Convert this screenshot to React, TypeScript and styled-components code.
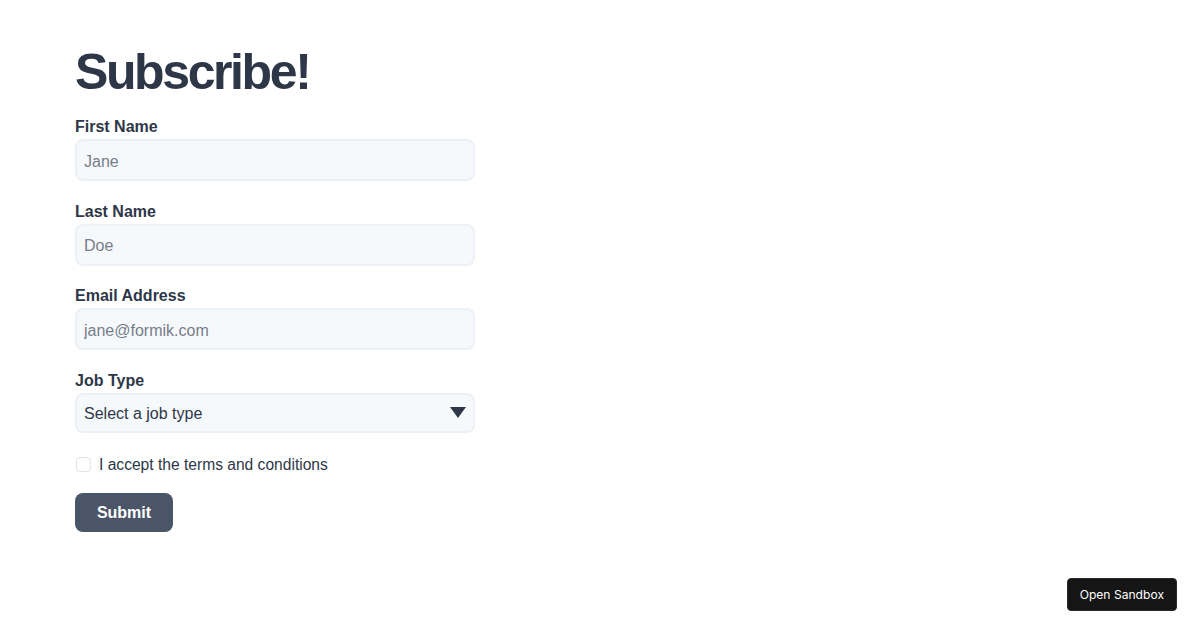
import React from "react";
import styled, { createGlobalStyle } from "styled-components";

const GlobalStyle = createGlobalStyle`
  body {
    margin: 0;
    background: #fff;
    font-family: "Liberation Sans", Arial, sans-serif;
    color: #2d3748;
  }
`;

const App = () => {
  return (
    <>
      <GlobalStyle />
      <Page>
        <Title>Subscribe!</Title>
        <Form onSubmit={(e) => e.preventDefault()}>
          <Field>
            <Label htmlFor="firstName">First Name</Label>
            <Input id="firstName" placeholder="Jane" />
          </Field>
          <Field>
            <Label htmlFor="lastName">Last Name</Label>
            <Input id="lastName" placeholder="Doe" />
          </Field>
          <Field>
            <Label htmlFor="email">Email Address</Label>
            <Input id="email" type="email" placeholder="jane@formik.com" />
          </Field>
          <Field>
            <Label htmlFor="jobType">Job Type</Label>
            <SelectWrap>
              <Select id="jobType" defaultValue="">
                <option value="">Select a job type</option>
                <option value="designer">Designer</option>
                <option value="development">Developer</option>
                <option value="product">Product Manager</option>
                <option value="other">Other</option>
              </Select>
              <Arrow viewBox="0 0 16 12">
                <path d="M0 0h16L8 11z" fill="#2d3748" />
              </Arrow>
            </SelectWrap>
          </Field>
          <CheckRow>
            <Checkbox type="checkbox" />
            <span>I accept the terms and conditions</span>
          </CheckRow>
          <SubmitButton type="submit">Submit</SubmitButton>
        </Form>
      </Page>
      <SandboxButton>Open Sandbox</SandboxButton>
    </>
  );
};

const Page = styled.div`
  padding: 40px 75px;
  max-width: 400px;
`;

const Title = styled.h1`
  margin: 0 0 14px;
  font-size: 50px;
  line-height: 64px;
  font-weight: 700;
  letter-spacing: -2.4px;
  color: #2d3748;
`;

const Form = styled.form`
  display: flex;
  flex-direction: column;
`;

const Field = styled.div`
  display: flex;
  flex-direction: column;
  margin-bottom: 21.7px;
`;

const Label = styled.label`
  font-size: 16px;
  line-height: 18px;
  font-weight: 700;
  margin-bottom: 3px;
  color: #2d3748;
`;

const Input = styled.input`
  box-sizing: border-box;
  width: 400px;
  height: 42px;
  padding: 3px 7px 0;
  border: 2px solid #edf0f4;
  border-radius: 8px;
  background: #f6f9fc;
  font-family: inherit;
  font-size: 16px;
  color: #2d3748;
  outline: none;
  &::placeholder {
    color: #767d88;
  }
`;

const SelectWrap = styled.div`
  position: relative;
  width: 400px;
`;

const Select = styled.select`
  box-sizing: border-box;
  width: 400px;
  height: 40px;
  padding: 0 7px;
  border: 2px solid #edf0f4;
  border-radius: 8px;
  background: #f6f9fc;
  font-family: inherit;
  font-size: 16px;
  color: #2d3748;
  appearance: none;
  outline: none;
`;

const Arrow = styled.svg`
  position: absolute;
  right: 9px;
  top: 14px;
  width: 16px;
  height: 12px;
  pointer-events: none;
`;

const CheckRow = styled.label`
  display: flex;
  align-items: center;
  gap: 8px;
  font-size: 15.6px;
  color: #2d3748;
  margin: 1px 0 19px;
`;

const Checkbox = styled.input`
  box-sizing: border-box;
  margin: 0 0 0 1px;
  width: 15px;
  height: 15px;
  appearance: none;
  border: 1.5px solid #dfe3ea;
  border-radius: 4px;
  background: #fff;
`;

const SubmitButton = styled.button`
  align-self: flex-start;
  width: 98px;
  height: 39px;
  padding-top: 2px;
  border: none;
  border-radius: 8px;
  background: #4a5568;
  color: #fff;
  font-family: inherit;
  font-size: 16px;
  font-weight: 700;
  cursor: pointer;
`;

const SandboxButton = styled.button`
  position: fixed;
  right: 23px;
  bottom: 19px;
  height: 33px;
  padding: 0 12px;
  border: 1px solid #2a2a2a;
  border-radius: 4px;
  background: #151515;
  color: #fff;
  font-family: Inter, "Liberation Sans", sans-serif;
  font-size: 12.1px;
  cursor: pointer;
`;

export default App;
